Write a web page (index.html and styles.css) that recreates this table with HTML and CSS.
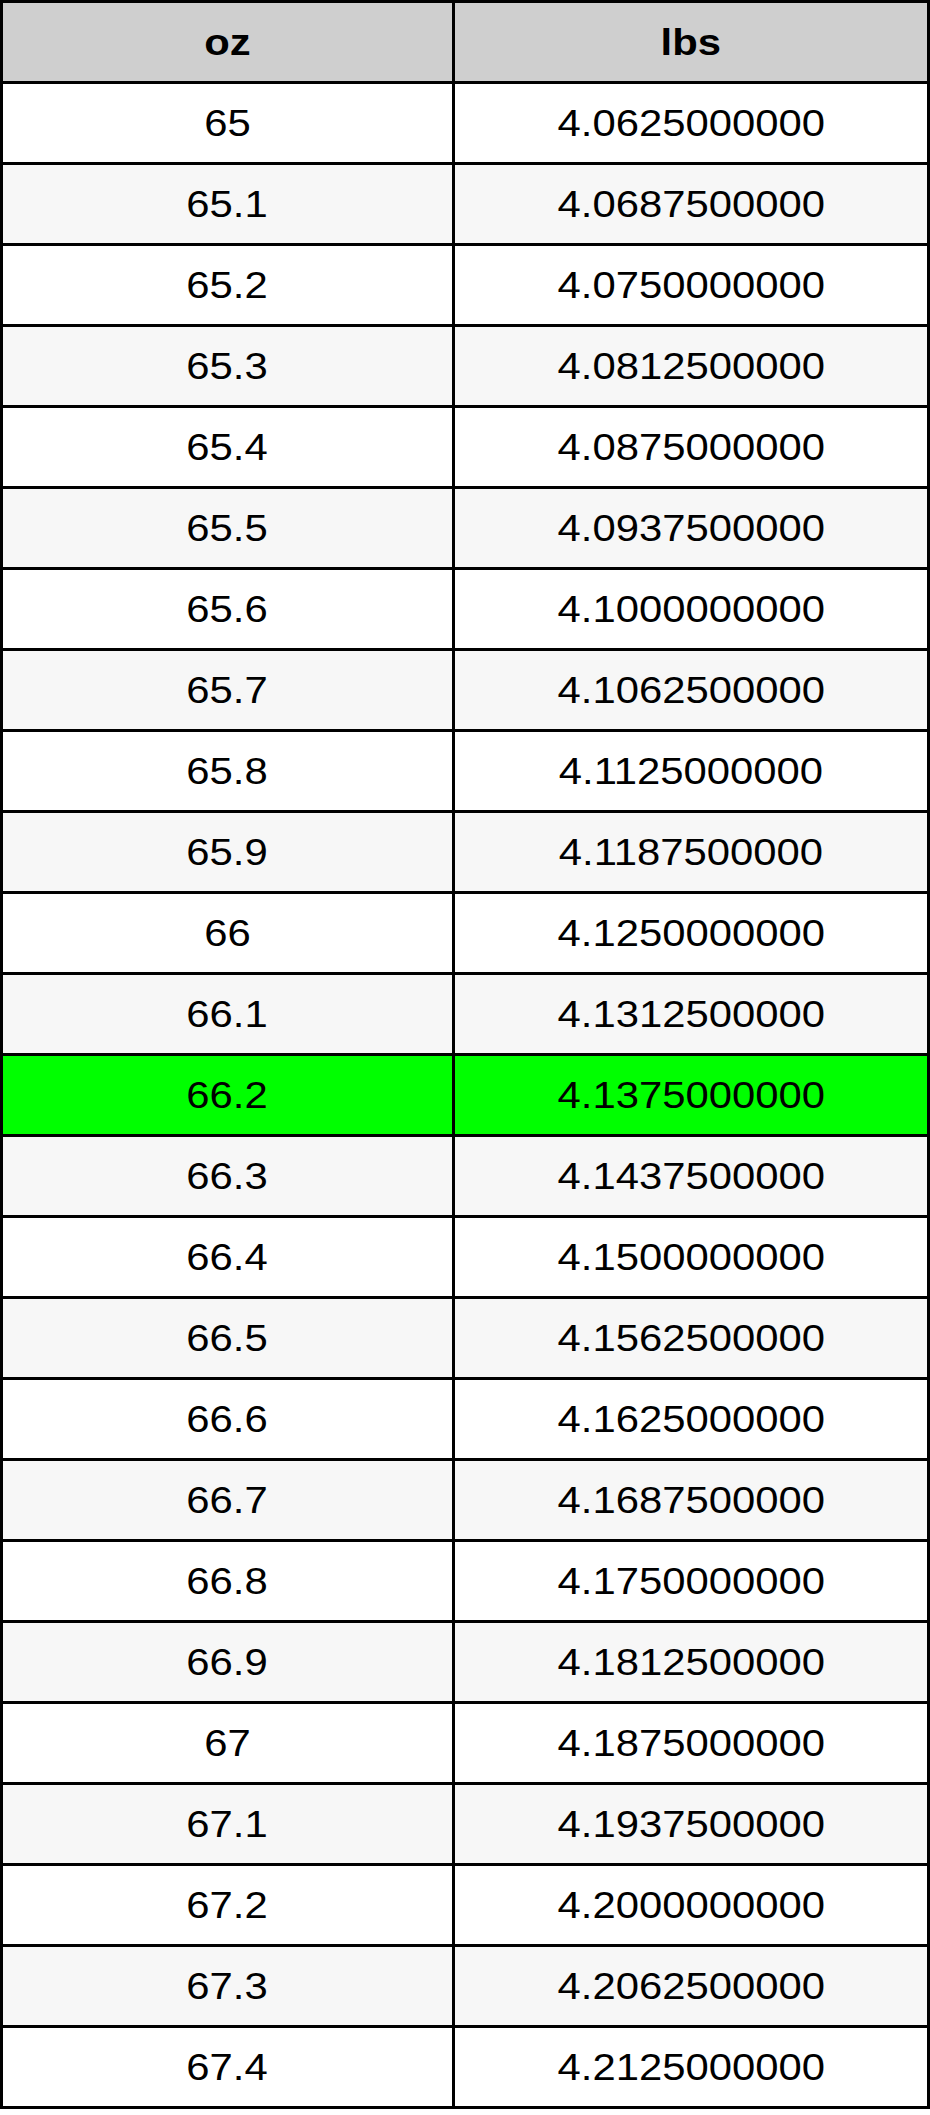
FILE: index.html
```html
<!DOCTYPE html>
<html>
<head>
<meta charset="utf-8">
<link rel="stylesheet" href="styles.css">
</head>
<body>
<table class="conv">
<colgroup><col class="c1"><col class="c2"></colgroup>
<thead>
<tr><th><span class="t">oz</span></th><th><span class="t">lbs</span></th></tr>
</thead>
<tbody>
<tr><td><span class="t">65</span></td><td><span class="t">4.0625000000</span></td></tr>
<tr><td><span class="t">65.1</span></td><td><span class="t">4.0687500000</span></td></tr>
<tr><td><span class="t">65.2</span></td><td><span class="t">4.0750000000</span></td></tr>
<tr><td><span class="t">65.3</span></td><td><span class="t">4.0812500000</span></td></tr>
<tr><td><span class="t">65.4</span></td><td><span class="t">4.0875000000</span></td></tr>
<tr><td><span class="t">65.5</span></td><td><span class="t">4.0937500000</span></td></tr>
<tr><td><span class="t">65.6</span></td><td><span class="t">4.1000000000</span></td></tr>
<tr><td><span class="t">65.7</span></td><td><span class="t">4.1062500000</span></td></tr>
<tr><td><span class="t">65.8</span></td><td><span class="t">4.1125000000</span></td></tr>
<tr><td><span class="t">65.9</span></td><td><span class="t">4.1187500000</span></td></tr>
<tr><td><span class="t">66</span></td><td><span class="t">4.1250000000</span></td></tr>
<tr><td><span class="t">66.1</span></td><td><span class="t">4.1312500000</span></td></tr>
<tr class="hl"><td><span class="t">66.2</span></td><td><span class="t">4.1375000000</span></td></tr>
<tr><td><span class="t">66.3</span></td><td><span class="t">4.1437500000</span></td></tr>
<tr><td><span class="t">66.4</span></td><td><span class="t">4.1500000000</span></td></tr>
<tr><td><span class="t">66.5</span></td><td><span class="t">4.1562500000</span></td></tr>
<tr><td><span class="t">66.6</span></td><td><span class="t">4.1625000000</span></td></tr>
<tr><td><span class="t">66.7</span></td><td><span class="t">4.1687500000</span></td></tr>
<tr><td><span class="t">66.8</span></td><td><span class="t">4.1750000000</span></td></tr>
<tr><td><span class="t">66.9</span></td><td><span class="t">4.1812500000</span></td></tr>
<tr><td><span class="t">67</span></td><td><span class="t">4.1875000000</span></td></tr>
<tr><td><span class="t">67.1</span></td><td><span class="t">4.1937500000</span></td></tr>
<tr><td><span class="t">67.2</span></td><td><span class="t">4.2000000000</span></td></tr>
<tr><td><span class="t">67.3</span></td><td><span class="t">4.2062500000</span></td></tr>
<tr><td><span class="t">67.4</span></td><td><span class="t">4.2125000000</span></td></tr>
</tbody>
</table>
</body>
</html>
```

FILE: styles.css
```css
html, body {
  margin: 0;
  padding: 0;
  background: #ffffff;
}

.conv {
  width: 930px;
  border-collapse: collapse;
  table-layout: fixed;
  border: 3px solid #000000;
  font-family: "Liberation Sans", Arial, sans-serif;
  font-size: 37px;
  color: #000000;
}

.conv .c1 {
  width: 452px;
}

.conv th,
.conv td {
  height: 78px;
  padding: 0;
  border: 3px solid #000000;
  text-align: center;
  vertical-align: middle;
  line-height: 1;
}

.conv th {
  background: #cfcfcf;
  font-weight: bold;
}

.conv tbody tr:nth-child(odd) td {
  background: #ffffff;
}

.conv tbody tr:nth-child(even) td {
  background: #f7f7f7;
}

.conv tbody tr.hl td {
  background: #00ff00;
}

.t {
  display: inline-block;
  transform: scaleX(1.13);
  transform-origin: center;
}
```
